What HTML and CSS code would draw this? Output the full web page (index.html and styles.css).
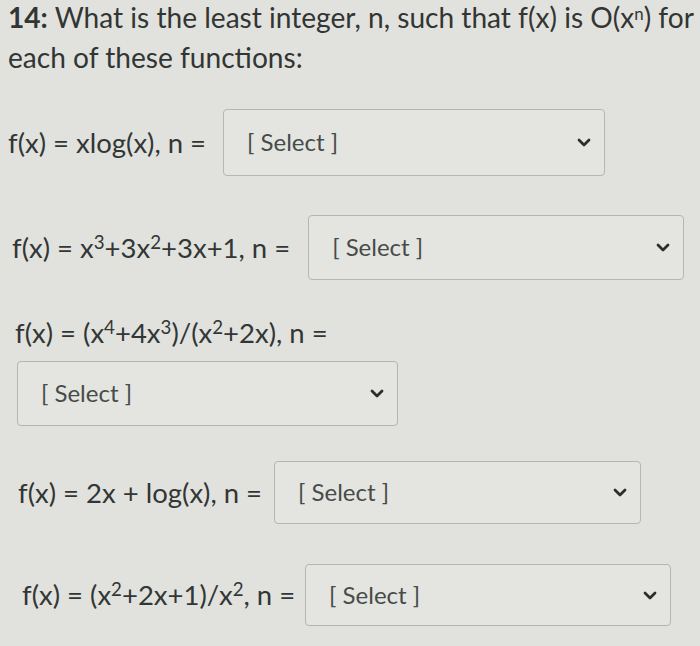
FILE: index.html
```html
<!DOCTYPE html>
<html lang="en">
<head>
<meta charset="utf-8">
<title>Question 14</title>
<link rel="stylesheet" href="styles.css">
</head>
<body>
<div class="page">
  <p class="question"><strong>14:</strong> What is the least integer, n, such that f(x) is O(x<sup class="sup-n">n</sup>) for<br>each of these functions:</p>

  <div class="row row-1">
    <span class="label">f(x) = xlog(x), n =</span>
    <div class="select select-1"><span class="select-text">[ Select ]</span><svg class="chev" viewBox="0 0 14 9" width="14" height="9"><path d="M2 2 L7 7 L12 2" fill="none" stroke="#2b2e2d" stroke-width="2.8" stroke-linecap="round" stroke-linejoin="round"/></svg></div>
  </div>

  <div class="row row-2">
    <span class="label">f(x) = x<sup>3</sup>+3x<sup>2</sup>+3x+1, n =</span>
    <div class="select select-2"><span class="select-text">[ Select ]</span><svg class="chev" viewBox="0 0 14 9" width="14" height="9"><path d="M2 2 L7 7 L12 2" fill="none" stroke="#2b2e2d" stroke-width="2.8" stroke-linecap="round" stroke-linejoin="round"/></svg></div>
  </div>

  <div class="row-stack row-3">
    <span class="label">f(x) = (x<sup>4</sup>+4x<sup>3</sup>)/(x<sup>2</sup>+2x), n =</span>
    <div class="select select-3"><span class="select-text">[ Select ]</span><svg class="chev" viewBox="0 0 14 9" width="14" height="9"><path d="M2 2 L7 7 L12 2" fill="none" stroke="#2b2e2d" stroke-width="2.8" stroke-linecap="round" stroke-linejoin="round"/></svg></div>
  </div>

  <div class="row row-4">
    <span class="label">f(x) = 2x + log(x), n =</span>
    <div class="select select-4"><span class="select-text">[ Select ]</span><svg class="chev" viewBox="0 0 14 9" width="14" height="9"><path d="M2 2 L7 7 L12 2" fill="none" stroke="#2b2e2d" stroke-width="2.8" stroke-linecap="round" stroke-linejoin="round"/></svg></div>
  </div>

  <div class="row row-5">
    <span class="label">f(x) = (x<sup>2</sup>+2x+1)/x<sup>2</sup>, n =</span>
    <div class="select select-5"><span class="select-text">[ Select ]</span><svg class="chev" viewBox="0 0 14 9" width="14" height="9"><path d="M2 2 L7 7 L12 2" fill="none" stroke="#2b2e2d" stroke-width="2.8" stroke-linecap="round" stroke-linejoin="round"/></svg></div>
  </div>
</div>
</body>
</html>
```

FILE: styles.css
```css
html, body {
  margin: 0;
  padding: 0;
}

body {
  background: #e1e2dd;
  font-family: Lato, "Open Sans", "Liberation Sans", sans-serif;
  color: #2e3231;
  width: 700px;
  height: 646px;
  overflow: hidden;
}

.page {
  padding: 0 0 0 8px;
}

.question {
  margin: -3px 0 0 0;
  font-size: 28.1px;
  line-height: 40px;
  white-space: nowrap;
  color: #313534;
}

.question strong {
  font-weight: 700;
}

.sup-n {
  font-size: 0.6em;
}

sup {
  font-size: 0.68em;
  line-height: 0;
  vertical-align: 0.5em;
}

.row {
  display: flex;
  align-items: center;
}

.row-stack {
  display: flex;
  flex-direction: column;
  align-items: flex-start;
}

.label {
  font-size: 27.5px;
  line-height: 30px;
  white-space: nowrap;
  color: #323635;
}

.select {
  box-sizing: border-box;
  display: flex;
  align-items: center;
  justify-content: space-between;
  border: 1.5px solid #b3b6b1;
  border-radius: 4px;
  background: #e4e5e0;
  padding: 0 13px 0 23px;
}

.select-text {
  font-size: 24px;
  color: #474b4a;
  padding-bottom: 2px;
}

.chev {
  display: block;
}

.row-1 {
  margin-top: 32px;
  gap: 17px;
}
.select-1 {
  width: 382px;
  height: 67px;
}

.row-2 {
  margin-top: 39px;
  padding-left: 4px;
  gap: 18px;
}
.select-2 {
  width: 376px;
  height: 65px;
}

.row-3 {
  margin-top: 38px;
  padding-left: 7px;
  gap: 13px;
}
.select-3 {
  width: 381px;
  height: 65px;
  margin-left: 2px;
}

.row-4 {
  margin-top: 35px;
  padding-left: 10px;
  gap: 12px;
}
.select-4 {
  width: 367px;
  height: 63px;
}

.row-5 {
  margin-top: 40px;
  padding-left: 14px;
  gap: 10px;
}
.select-5 {
  width: 366px;
  height: 62px;
}
```
